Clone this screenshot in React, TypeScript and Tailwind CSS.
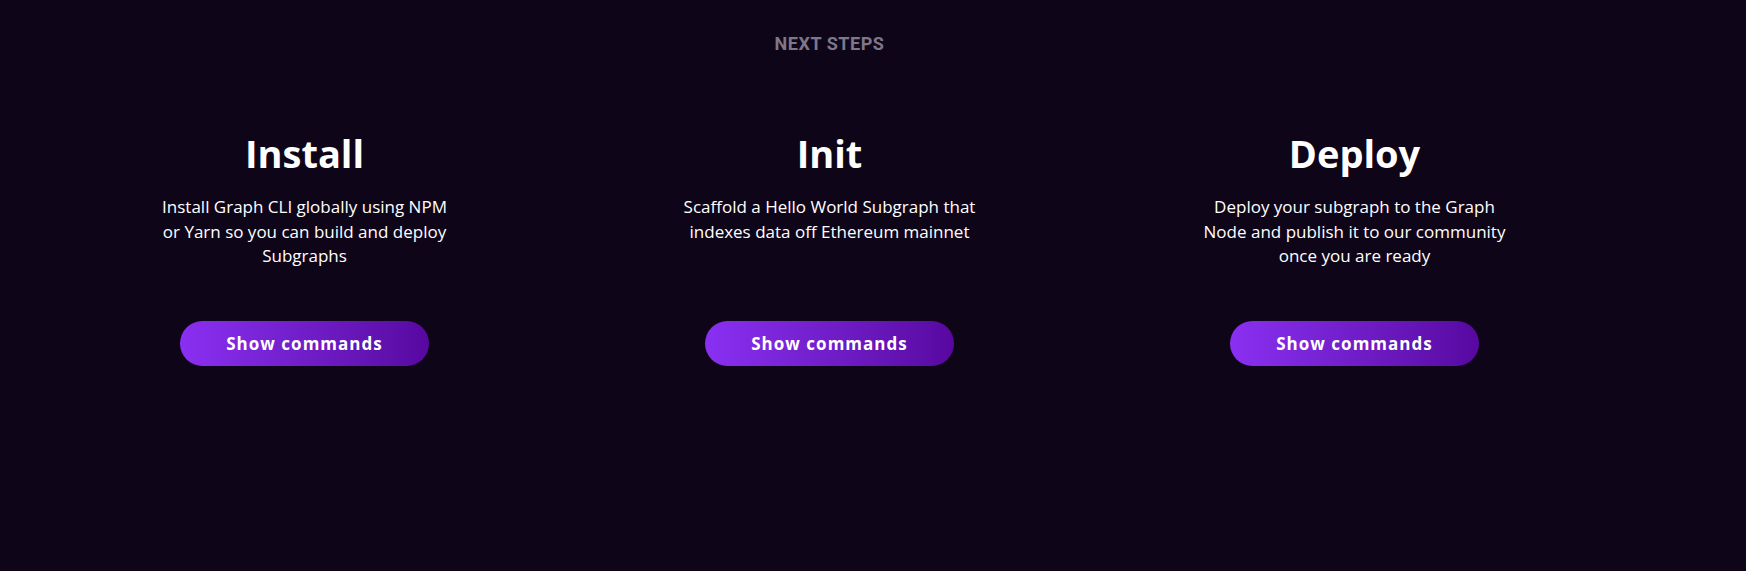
import React from "react"

const steps = [
  {
    title: "Install",
    lines: ["Install Graph CLI globally using NPM", "or Yarn so you can build and deploy", "Subgraphs"],
  },
  {
    title: "Init",
    lines: ["Scaffold a Hello World Subgraph that", "indexes data off Ethereum mainnet"],
  },
  {
    title: "Deploy",
    lines: ["Deploy your subgraph to the Graph", "Node and publish it to our community", "once you are ready"],
  },
]

export default function App() {
  return (
    <div className="min-h-[571px] w-full bg-[#0f0519] font-['Open_Sans',sans-serif] text-white">
      <div className="ml-[42px] w-[1575px] pt-[30px]">
        <h2 className="text-center font-['Roboto',sans-serif] text-[18px] leading-[27px] font-bold tracking-[0.03em] text-[#7e7689]">
          NEXT STEPS
        </h2>
        <div className="mt-[72px] grid grid-cols-3">
          {steps.map((step) => (
            <div key={step.title} className="flex flex-col items-center text-center">
              <h3 className="text-[38px] leading-[48px] font-bold">{step.title}</h3>
              <p className="mt-[18px] h-[74px] text-[17px] leading-[24.5px]">
                {step.lines.map((line, i) => (
                  <React.Fragment key={i}>
                    {i > 0 && <br />}
                    {line}
                  </React.Fragment>
                ))}
              </p>
              <button className="mt-[52px] flex h-[45px] w-[249px] items-center justify-center rounded-full bg-gradient-to-r from-[#8a30f2] to-[#5808a0] text-[17px] font-bold tracking-[0.06em] text-white">
                Show commands
              </button>
            </div>
          ))}
        </div>
      </div>
    </div>
  )
}
